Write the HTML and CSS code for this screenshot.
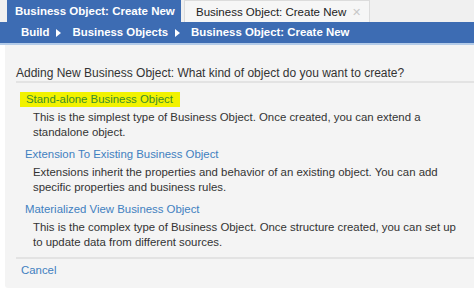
FILE: index.html
```html
<!DOCTYPE html>
<html>
<head>
<meta charset="utf-8">
<link rel="stylesheet" href="styles.css">
</head>
<body>
<div class="page">
  <div class="tabs">
    <div class="tab active">Business Object: Create New</div>
    <div class="tab">Business Object: Create New <span class="close">✕</span></div>
  </div>
  <div class="crumbs">
    <span>Build</span><span class="arrow"></span>
    <span>Business Objects</span><span class="arrow"></span>
    <span>Business Object: Create New</span>
  </div>
  <div class="panel">
    <div class="question">Adding New Business Object: What kind of object do you want to create?</div>
    <div class="option">
      <a class="link hl">Stand-alone Business Object</a>
      <p class="desc">This is the simplest type of Business Object. Once created, you can extend a standalone object.</p>
    </div>
    <div class="option">
      <a class="link">Extension To Existing Business Object</a>
      <p class="desc">Extensions inherit the properties and behavior of an existing object. You can add specific properties and business rules.</p>
    </div>
    <div class="option">
      <a class="link">Materialized View Business Object</a>
      <p class="desc">This is the complex type of Business Object. Once structure created, you can set up to update data from different sources.</p>
    </div>
    <div class="footer"><a class="cancel">Cancel</a></div>
  </div>
</div>
</body>
</html>
```
FILE: styles.css
```css
html, body { margin: 0; padding: 0; background: #fff; }
body { font-family: "Liberation Sans", Arial, sans-serif; font-size: 11.4px; color: #333; }
.page { width: 474px; height: 292px; overflow: hidden; background: #fff; }
.tabs { display: flex; height: 22px; background: #f0f0f0; padding-left: 7px; gap: 3px; }
.tab { height: 22px; line-height: 23px; background: #f6f6f6; color: #222; font-size: 11.5px; border: 1px solid #dcdcdc; border-bottom: none; box-sizing: border-box; width: 186px; padding-left: 11px; white-space: nowrap; }
.tab.active { background: #3d6cb3; color: #fff; font-weight: bold; width: 174px; border: none; padding-left: 8px; font-size: 11.5px; }
.close { color: #c8c8c8; margin-left: 3px; font-size: 11px; }
.crumbs { height: 21px; background: #3d6cb3; color: #fff; font-weight: bold; font-size: 11.4px; line-height: 21px; padding-left: 21px; display: flex; align-items: center; border-bottom: 2px solid #b3cbe8; white-space: nowrap; }
.arrow { display: inline-block; width: 0; height: 0; border-left: 5px solid #fff; border-top: 4px solid transparent; border-bottom: 4px solid transparent; margin: 0 11px 0 7px; }
.panel { margin-left: 5px; padding: 21px 0 0 11px; background: #f4f4f4; height: 222px; border-bottom-left-radius: 3px; }
.question { padding-bottom: 1px; border-bottom: 2px solid #e3e3e3; margin-bottom: 9px; line-height: 14px; font-size: 12px; }
.option { margin-bottom: 7px; }
.link { display: inline-block; color: #3f80c0; margin-left: 9px; line-height: 15px; }
.hl { background: #f2f200; color: #3b8d2c; padding: 0 7px 0 6px; margin-left: 4px; }
.desc { margin: 3px 0 0 17px; line-height: 15px; width: 432px; }
.option:last-of-type { margin-bottom: 6px; }
.footer { border-top: 2px solid #e3e3e3; padding-top: 4px; }
.cancel { color: #3f80c0; margin-left: 5px; line-height: 15px; }
```
